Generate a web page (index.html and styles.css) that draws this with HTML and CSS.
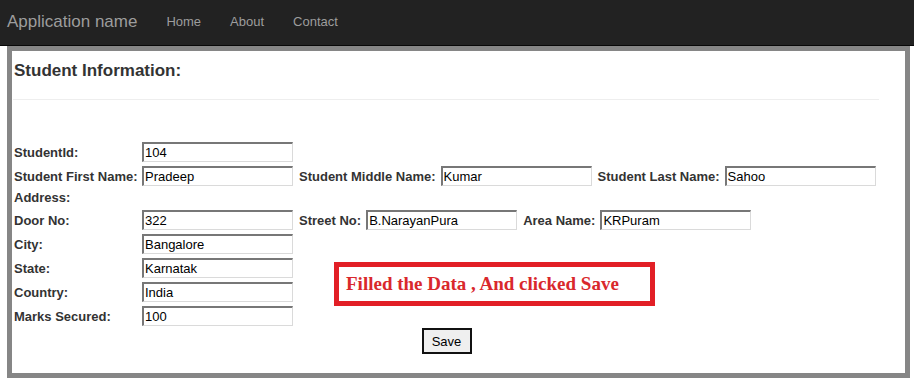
FILE: index.html
```html
<!DOCTYPE html>
<html>
<head>
<meta charset="utf-8">
<title>Student Information</title>
<link rel="stylesheet" href="styles.css">
</head>
<body>
<nav class="navbar">
  <span class="brand">Application name</span>
  <ul class="nav-links">
    <li>Home</li>
    <li>About</li>
    <li>Contact</li>
  </ul>
</nav>
<div class="frame">
  <div class="content">
    <h2 class="title">Student Information:</h2>
    <hr class="rule">
    <form class="form">
      <div class="row">
        <label class="lbl first">StudentId:</label>
        <input class="field" type="text" value="104">
      </div>
      <div class="row">
        <label class="lbl first">Student First Name:</label>
        <input class="field" type="text" value="Pradeep">
        <label class="lbl">Student Middle Name:</label>
        <input class="field" type="text" value="Kumar">
        <label class="lbl">Student Last Name:</label>
        <input class="field" type="text" value="Sahoo">
      </div>
      <div class="row short">
        <label class="lbl first">Address:</label>
      </div>
      <div class="row">
        <label class="lbl first">Door No:</label>
        <input class="field" type="text" value="322">
        <label class="lbl">Street No:</label>
        <input class="field" type="text" value="B.NarayanPura">
        <label class="lbl">Area Name:</label>
        <input class="field" type="text" value="KRPuram">
      </div>
      <div class="row">
        <label class="lbl first">City:</label>
        <input class="field" type="text" value="Bangalore">
      </div>
      <div class="row">
        <label class="lbl first">State:</label>
        <input class="field" type="text" value="Karnatak">
      </div>
      <div class="row">
        <label class="lbl first">Country:</label>
        <input class="field" type="text" value="India">
      </div>
      <div class="row">
        <label class="lbl first">Marks Secured:</label>
        <input class="field" type="text" value="100">
      </div>
      <button class="save" type="button">Save</button>
    </form>
  </div>
  <div class="note">Filled the Data , And clicked Save</div>
</div>
</body>
</html>
```

FILE: styles.css
```css
html, body {
  margin: 0;
  padding: 0;
  background: #ffffff;
  font-family: "Liberation Sans", Arial, sans-serif;
}

.navbar {
  height: 45px;
  background: #222222;
  border-bottom: 1px solid #080808;
  display: flex;
  align-items: center;
}

.brand {
  margin-left: 7px;
  font-size: 17px;
  color: #9d9d9d;
  line-height: 20px;
  margin-top: -2px;
}

.nav-links {
  list-style: none;
  margin: -2px 0 0 29px;
  padding: 0;
  display: flex;
  gap: 29px;
  font-size: 13px;
  color: #9d9d9d;
  line-height: 20px;
}

.frame {
  position: relative;
  box-sizing: border-box;
  margin-left: 7px;
  width: 903px;
  height: 332px;
  border: 5px solid #868686;
  padding-left: 1px;
}

.content {
  width: 866px;
}

.title {
  margin: 10px 0 0 1px;
  font-size: 17px;
  line-height: 20px;
  font-weight: bold;
  color: #333333;
}

.rule {
  margin: 18px 0 0 0;
  border: 0;
  border-top: 1px solid #eeeeee;
  height: 0;
}

.form {
  margin: 42px 0 0 0;
  padding-left: 1px;
  display: flex;
  flex-direction: column;
  gap: 4px;
}

.row {
  display: flex;
  align-items: baseline;
  height: 20px;
}

.row.short {
  height: 16px;
}

.lbl {
  font-size: 13px;
  font-weight: bold;
  color: #333333;
  line-height: 16px;
  margin: 0 5px 0 6px;
  white-space: nowrap;
}

.lbl.first {
  width: 128px;
  margin: 0;
}

.field {
  box-sizing: border-box;
  width: 151px;
  height: 20px;
  margin: 0;
  padding: 0 2px 0 1px;
  font-family: "Liberation Sans", Arial, sans-serif;
  font-size: 13px;
  color: #000000;
  background: #ffffff;
  border-top: 2px solid #777777;
  border-left: 2px solid #777777;
  border-right: 1px solid #dadada;
  border-bottom: 1px solid #dadada;
  outline: none;
}

.save {
  display: block;
  box-sizing: border-box;
  width: 50px;
  height: 26px;
  margin: -2px auto 0;
  padding: 0;
  font-family: "Liberation Sans", Arial, sans-serif;
  font-size: 13px;
  color: #000000;
  background: #efefef;
  border: 2px solid #111111;
}

.note {
  position: absolute;
  left: 322px;
  top: 211px;
  box-sizing: border-box;
  width: 321px;
  height: 44px;
  border: 5px solid #e21f26;
  padding-left: 7px;
  display: flex;
  align-items: center;
  font-family: "Liberation Serif", "Times New Roman", serif;
  font-weight: bold;
  font-size: 19px;
  color: #d9282c;
}
```
